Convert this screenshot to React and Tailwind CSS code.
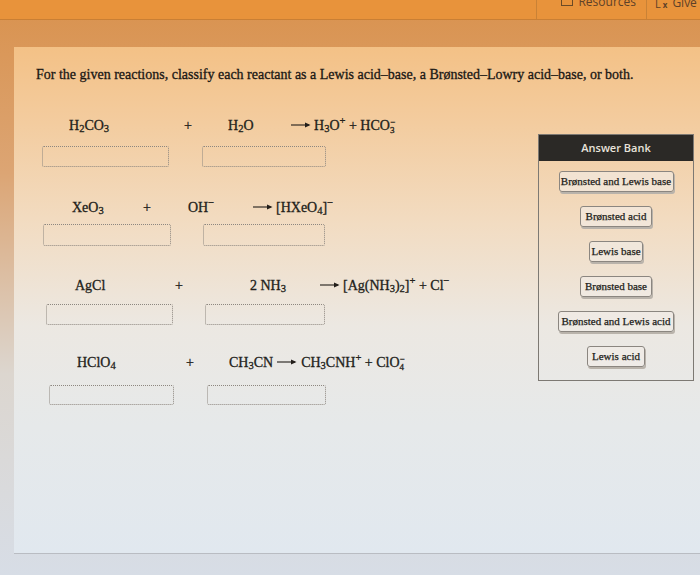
import React from "react";

const Arrow = () => (
  <svg width="20" height="8" viewBox="0 0 20 8" className="shrink-0">
    <line x1="0" y1="4" x2="18" y2="4" stroke="#221e1a" strokeWidth="1.1" />
    <path d="M14 1.5 L19.5 4 L14 6.5 Z" fill="#221e1a" />
  </svg>
);

const Stack = ({ sub, sup }) => (
  <span className="inline-flex flex-col align-[5px] text-[9px] leading-[8px]">
    <span>{sup}</span>
    <span>{sub}</span>
  </span>
);

const Box = ({ cls }) => (
  <div className={"rounded-[2px] border-[1.5px] border-dotted border-[#8d8780] " + cls} />
);

const Btn = ({ children, cls }) => (
  <div
    className={
      "flex h-[21px] items-center justify-center rounded-[3px] border border-[#8b8680] bg-[#f1ede7]/60 text-[11px] text-[#221e1a] shadow-[1px_2px_0_0_#b9b3ab] [-webkit-text-stroke:0.25px_#221e1a] " +
      cls
    }
  >
    {children}
  </div>
);

export default function App() {
  return (
    <div
      className="relative h-[575px] w-[700px] overflow-hidden bg-[linear-gradient(180deg,#d9924e_0%,#dca574_30%,#dcd6cf_65%,#d7dde6_100%)]"
      style={{ fontFamily: '"Liberation Serif", "Times New Roman", serif' }}
    >
      {/* top bar */}
      <div className="flex h-[20px] items-start justify-end border-b border-[#c97f34] bg-[#e8933b]">
        <div className="flex h-full items-start border-l border-[#c98236] pl-[24px] pr-[10px]">
          <div className="mt-[-4px] flex items-center gap-[5px]">
            <div className="h-[7px] w-[12px] border-x border-b border-[#6b4a26]" />
            <span
              className="text-[12px] leading-none text-[#5e4128]"
              style={{ fontFamily: '"Open Sans", sans-serif' }}
            >
              Resources
            </span>
          </div>
        </div>
        <div className="flex h-full w-[54px] items-start border-l border-[#c98236] pl-[8px]">
          <div
            className="mt-[-3px] flex items-center gap-[2px] text-[12px] leading-none text-[#5e4128]"
            style={{ fontFamily: '"Open Sans", sans-serif' }}
          >
            <span className="text-[11px]">L</span>
            <span className="mt-[4px] text-[8px] font-bold">x</span>
            <span className="ml-[3px]">Give</span>
          </div>
        </div>
      </div>

      {/* panel */}
      <div className="ml-[14px] mt-[27px] h-[506px] bg-[linear-gradient(180deg,#f3c186_0%,#f3cc9f_15%,#f2dcc2_35%,#ece8e2_55%,#e6e9ea_75%,#e1e8ef_100%)] pt-[20px] shadow-[0_1px_0_#b9bcc2]">
        <div className="h-[16px] whitespace-nowrap pl-[22px] text-[14px] leading-[16px] text-[#1a1714] [-webkit-text-stroke:0.3px_#1a1714]">
          For the given reactions, classify each reactant as a Lewis acid–base, a Brønsted–Lowry acid–base, or both.
        </div>

        <div className="flex">
          {/* reactions */}
          <div className="flex-1 text-[14px] text-[#221e1a] [-webkit-text-stroke:0.3px_#221e1a]">
            <div className="mt-[32px] flex h-5 items-center">
              <span className="ml-[55px] w-[115px]">
                H<sub>2</sub>CO<sub>3</sub>
              </span>
              <span className="w-[44px]">+</span>
              <span className="w-[63px]">
                H<sub>2</sub>O
              </span>
              <span className="flex items-center gap-[3px]">
                <Arrow />
                <span>
                  H<sub>3</sub>O<sup>+</sup> + HCO<Stack sub="3" sup="−" />
                </span>
              </span>
            </div>
            <div className="mt-[11px] flex">
              <Box cls="ml-[28px] h-[21px] w-[127px]" />
              <Box cls="ml-[33px] h-[21px] w-[124px]" />
            </div>

            <div className="mt-[30px] flex h-5 items-center">
              <span className="ml-[58px] w-[71px]">
                XeO<sub>3</sub>
              </span>
              <span className="w-[45px]">+</span>
              <span className="w-[65px]">
                OH<sup>−</sup>
              </span>
              <span className="flex items-center gap-[3px]">
                <Arrow />
                <span>
                  [HXeO<sub>4</sub>]<sup>−</sup>
                </span>
              </span>
            </div>
            <div className="mt-[7px] flex">
              <Box cls="ml-[29px] h-[22px] w-[128px]" />
              <Box cls="ml-[32px] h-[22px] w-[122px]" />
            </div>

            <div className="mt-[29px] flex h-5 items-center">
              <span className="ml-[61px] w-[100px]">AgCl</span>
              <span className="w-[75px]">+</span>
              <span className="w-[70px]">
                2 NH<sub>3</sub>
              </span>
              <span className="flex items-center gap-[3px]">
                <Arrow />
                <span>
                  [Ag(NH<sub>3</sub>)<sub>2</sub>]<sup>+</sup> + Cl<sup>−</sup>
                </span>
              </span>
            </div>
            <div className="mt-[9px] flex">
              <Box cls="ml-[32px] h-[21px] w-[127px]" />
              <Box cls="ml-[32px] h-[21px] w-[120px]" />
            </div>

            <div className="mt-[27px] flex h-5 items-center">
              <span className="ml-[63px] w-[109px]">
                HClO<sub>4</sub>
              </span>
              <span className="w-[43px]">+</span>
              <span className="flex items-center gap-[4px]">
                <span>
                  CH<sub>3</sub>CN
                </span>
                <Arrow />
                <span>
                  CH<sub>3</sub>CNH<sup>+</sup> + ClO<Stack sub="4" sup="−" />
                </span>
              </span>
            </div>
            <div className="mt-[13px] flex">
              <Box cls="ml-[35px] h-[20px] w-[125px]" />
              <Box cls="ml-[33px] h-[20px] w-[119px]" />
            </div>
          </div>

          {/* answer bank */}
          <div className="mr-[6px] mt-[51px] flex h-[247px] w-[156px] flex-col items-center border border-[#7d7973]">
            <div
              className="flex h-[26px] w-full items-center justify-center bg-[#2b2926] text-[11px] font-semibold text-[#e9e4dc]"
              style={{ fontFamily: '"Open Sans", sans-serif' }}
            >
              Answer Bank
            </div>
            <Btn cls="mt-[10px] w-[115px]">Brønsted and Lewis base</Btn>
            <Btn cls="mt-[14px] w-[72px]">Brønsted acid</Btn>
            <Btn cls="mt-[14px] w-[54px]">Lewis base</Btn>
            <Btn cls="mt-[14px] w-[72px]">Brønsted base</Btn>
            <Btn cls="mt-[14px] w-[116px]">Brønsted and Lewis acid</Btn>
            <Btn cls="mt-[14px] w-[58px]">Lewis acid</Btn>
          </div>
        </div>
      </div>
    </div>
  );
}
